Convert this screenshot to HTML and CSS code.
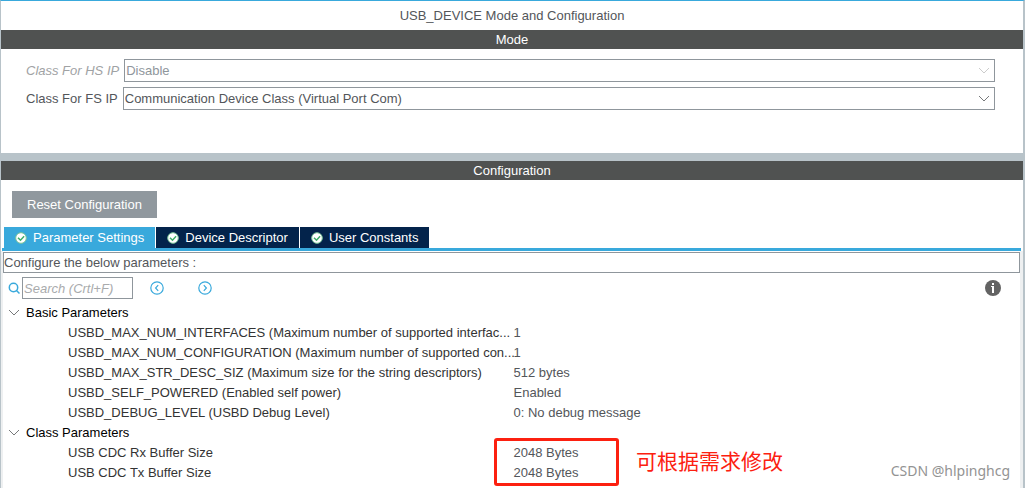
FILE: index.html
```html
<!DOCTYPE html>
<html lang="en">
<head>
  <meta charset="UTF-8">
  <meta name="viewport" content="width=device-width, initial-scale=1.0">
  <title>USB_DEVICE Mode and Configuration</title>
  <link rel="stylesheet" href="styles.css">
</head>
<body>
  <h1 class="page-title">USB_DEVICE Mode and Configuration</h1>

  <section class="mode">
    <h2 class="bar">Mode</h2>
    <div class="mode-fields">
      <div class="field disabled">
        <label for="class-hs">Class For HS IP</label>
        <div class="select-box">
          <select id="class-hs" disabled>
            <option>Disable</option>
          </select>
          <svg class="chevron" viewBox="0 0 12 7"><path d="M1 1l5 5 5-5"/></svg>
        </div>
      </div>
      <div class="field">
        <label for="class-fs">Class For FS IP</label>
        <div class="select-box">
          <select id="class-fs">
            <option>Communication Device Class (Virtual Port Com)</option>
          </select>
          <svg class="chevron" viewBox="0 0 12 7"><path d="M1 1l5 5 5-5"/></svg>
        </div>
      </div>
    </div>
  </section>

  <section class="configuration">
    <h2 class="bar">Configuration</h2>
    <button class="reset" type="button">Reset Configuration</button>

    <div class="tabs">
      <button class="tab active" type="button">
        <svg class="check" viewBox="0 0 12 12"><circle cx="6" cy="6" r="5.3"/><path d="M3 5.700l2.500 2.500 3.600-3.900"/></svg>
        Parameter Settings
      </button>
      <button class="tab" type="button">
        <svg class="check" viewBox="0 0 12 12"><circle cx="6" cy="6" r="5.3"/><path d="M3 5.700l2.500 2.500 3.600-3.900"/></svg>
        Device Descriptor
      </button>
      <button class="tab" type="button">
        <svg class="check" viewBox="0 0 12 12"><circle cx="6" cy="6" r="5.3"/><path d="M3 5.700l2.500 2.500 3.600-3.900"/></svg>
        User Constants
      </button>
    </div>

    <div class="tab-content">
      <p class="hint">Configure the below parameters :</p>

      <div class="toolbar">
        <label class="search-label" for="search" aria-label="Search">
          <svg class="search-icon" viewBox="0 0 12 12"><circle cx="5.500" cy="5.500" r="4.200"/><path d="M8.500 8.500l3 3"/></svg>
        </label>
        <input class="search" id="search" type="text" placeholder="Search (Crtl+F)">
        <button class="nav" type="button" aria-label="Previous">
          <svg viewBox="0 0 14 14"><circle cx="7" cy="7" r="6.2"/><path d="M8.2 4.2L5.6 7l2.6 2.8"/></svg>
        </button>
        <button class="nav next" type="button" aria-label="Next">
          <svg viewBox="0 0 14 14"><circle cx="7" cy="7" r="6.2"/><path d="M5.8 4.2L8.4 7 5.8 9.8"/></svg>
        </button>
        <button class="info" type="button" aria-label="Info">
          <svg viewBox="0 0 16 16"><circle cx="8" cy="8" r="8"/><path d="M7 3h2v2H7zM6 6h3v7H7V7H6z"/></svg>
        </button>
      </div>

      <table class="params">
        <tbody>
          <tr class="group">
            <th colspan="2"><svg class="chevron" viewBox="0 0 12 7"><path d="M1 1l5 5 5-5"/></svg>Basic Parameters</th>
          </tr>
          <tr><td>USBD_MAX_NUM_INTERFACES (Maximum number of supported interfac...</td><td>1</td></tr>
          <tr><td>USBD_MAX_NUM_CONFIGURATION (Maximum number of supported con...</td><td>1</td></tr>
          <tr><td>USBD_MAX_STR_DESC_SIZ (Maximum size for the string descriptors)</td><td>512 bytes</td></tr>
          <tr><td>USBD_SELF_POWERED (Enabled self power)</td><td>Enabled</td></tr>
          <tr><td>USBD_DEBUG_LEVEL (USBD Debug Level)</td><td>0: No debug message</td></tr>
        </tbody>
        <tbody>
          <tr class="group">
            <th colspan="2"><svg class="chevron" viewBox="0 0 12 7"><path d="M1 1l5 5 5-5"/></svg>Class Parameters</th>
          </tr>
          <tr><td>USB CDC Rx Buffer Size</td><td>2048 Bytes</td></tr>
          <tr><td>USB CDC Tx Buffer Size</td><td>2048 Bytes</td></tr>
        </tbody>
      </table>

      <!-- Highlight over the buffer sizes -->
      <div class="note">
        <div class="note-box"></div>
        <span class="note-text" lang="zh">可根据需求修改</span>
      </div>
    </div>
  </section>

  <div class="watermark">CSDN @hlpinghcg</div>
</body>
</html>
```
FILE: styles.css
```css
/* General Reset */
* {
  box-sizing: border-box;
}

body, h1, h2, p, input, button, select {
  margin: 0;
  padding: 0;
  font-family: "Liberation Sans", Arial, sans-serif;
  font-size: 13px;
  font-weight: normal;
}

body {
  position: relative;
  display: flex;
  flex-direction: column;
  min-height: 100vh;
  background-color: #ffffff;
  border-top: 1px solid #39a9dc;
  border-left: 1px solid #b8c3c9;
  border-right: 2px solid #b8c3c9;
  color: #53565a;
}

svg {
  display: block;
  fill: none;
}

button {
  border: none;
  cursor: pointer;
}

.page-title {
  line-height: 29px;
  text-align: center;
}

.bar {
  background-color: #505251;
  color: #ffffff;
  line-height: 19px;
  text-align: center;
}

/* Mode Section */
.mode {
  border-bottom: 8px solid #b8c3c9;
}

.mode-fields {
  display: flex;
  flex-direction: column;
  gap: 5px;
  padding: 10px 28px 43px 25px;
}

.field {
  display: flex;
  align-items: center;
  gap: 5px;
}

.select-box {
  position: relative;
  flex: 1;
}

.select-box select {
  display: block;
  width: 100%;
  height: 23px;
  padding: 0 20px 0 1px;
  appearance: none;
  background-color: #ffffff;
  border: 1px solid #8f969c;
  border-radius: 0;
  color: #53565a;
}

.chevron {
  width: 12px;
  height: 7px;
  stroke: #77797b;
}

.select-box .chevron {
  position: absolute;
  top: 8px;
  right: 5px;
  pointer-events: none;
}

.disabled label {
  color: #a0a2a4;
  font-style: italic;
}

.select-box select:disabled {
  color: #8f969c;
  opacity: 1;
}

.disabled .chevron {
  stroke: #cccccc;
}

/* Configuration Section */
.configuration {
  flex: 1;
  display: flex;
  flex-direction: column;
}

.reset {
  align-self: flex-start;
  height: 27px;
  margin: 11px 11px 9px;
  padding: 0 15px;
  background-color: #90989e;
  color: #ffffff;
}

.tabs {
  display: flex;
  gap: 1px;
  margin: 0 2px 0 1px;
  padding-left: 2px;
  border-bottom: 3px solid #39a9dc;
}

.tab {
  display: flex;
  align-items: center;
  gap: 6px;
  height: 21px;
  padding: 0 11px;
  background-color: #03234b;
  color: #ffffff;
}

.tab.active {
  background-color: #39a9dc;
}

.check {
  width: 12px;
  height: 12px;
}

.check circle {
  fill: #ffffff;
  stroke: #7cc598;
}

.check path {
  stroke: #3fae68;
  stroke-width: 1.5;
}

.tab-content {
  position: relative;
  flex: 1;
  padding-top: 1px;
  border-left: 2px solid #eef0f1;
  border-right: 3px solid #eef0f1;
}

.hint {
  border: 1px solid #8f969c;
  line-height: 19px;
}

.toolbar {
  display: flex;
  align-items: center;
  padding: 4px 19px 4px 5px;
}

.search-icon {
  width: 12px;
  height: 12px;
  stroke: #39a9dc;
  stroke-width: 1.5;
}

.search {
  width: 111px;
  height: 22px;
  margin: 0 17px 0 2px;
  padding: 0 1px;
  border: 1px solid #8f969c;
}

.search::placeholder {
  color: #a9abad;
  font-style: italic;
}

.nav, .info {
  background: none;
}

.nav svg {
  width: 14px;
  height: 14px;
  stroke: #39a9dc;
  stroke-width: 1.2;
}

.next {
  margin-left: 34px;
}

.info {
  margin-left: auto;
}

.info svg {
  width: 16px;
  height: 16px;
}

.info circle {
  fill: #636363;
}

.info path {
  fill: #ffffff;
}

/* Parameter table */
.params {
  width: 100%;
  table-layout: fixed;
  border-collapse: collapse;
}

.params th, .params td {
  height: 20px;
  padding: 0 0 0 2px;
  line-height: 20px;
  text-align: left;
  font-weight: normal;
  white-space: nowrap;
}

.params td:first-child {
  padding-left: 65px;
  color: #333333;
}

.params th {
  padding-left: 5px;
  color: #000000;
}

.params .chevron {
  display: inline-block;
  margin-right: 6px;
  vertical-align: 1px;
}

/* Highlight and note */
.note {
  position: absolute;
  top: 187px;
  left: 491px;
  display: flex;
  align-items: center;
  gap: 17px;
}

.note-box {
  width: 125px;
  height: 48px;
  border: 3px solid #fc2010;
  border-radius: 3px;
}

.note-text {
  color: #fc2010;
  font-family: "Liberation Sans", "Noto Sans CJK SC", sans-serif;
  font-size: 21px;
  line-height: 24px;
}

.watermark {
  position: absolute;
  right: 13px;
  bottom: 7px;
  color: #939393;
  font-family: "Noto Sans", sans-serif;
  font-size: 14px;
  line-height: 20px;
}
```
